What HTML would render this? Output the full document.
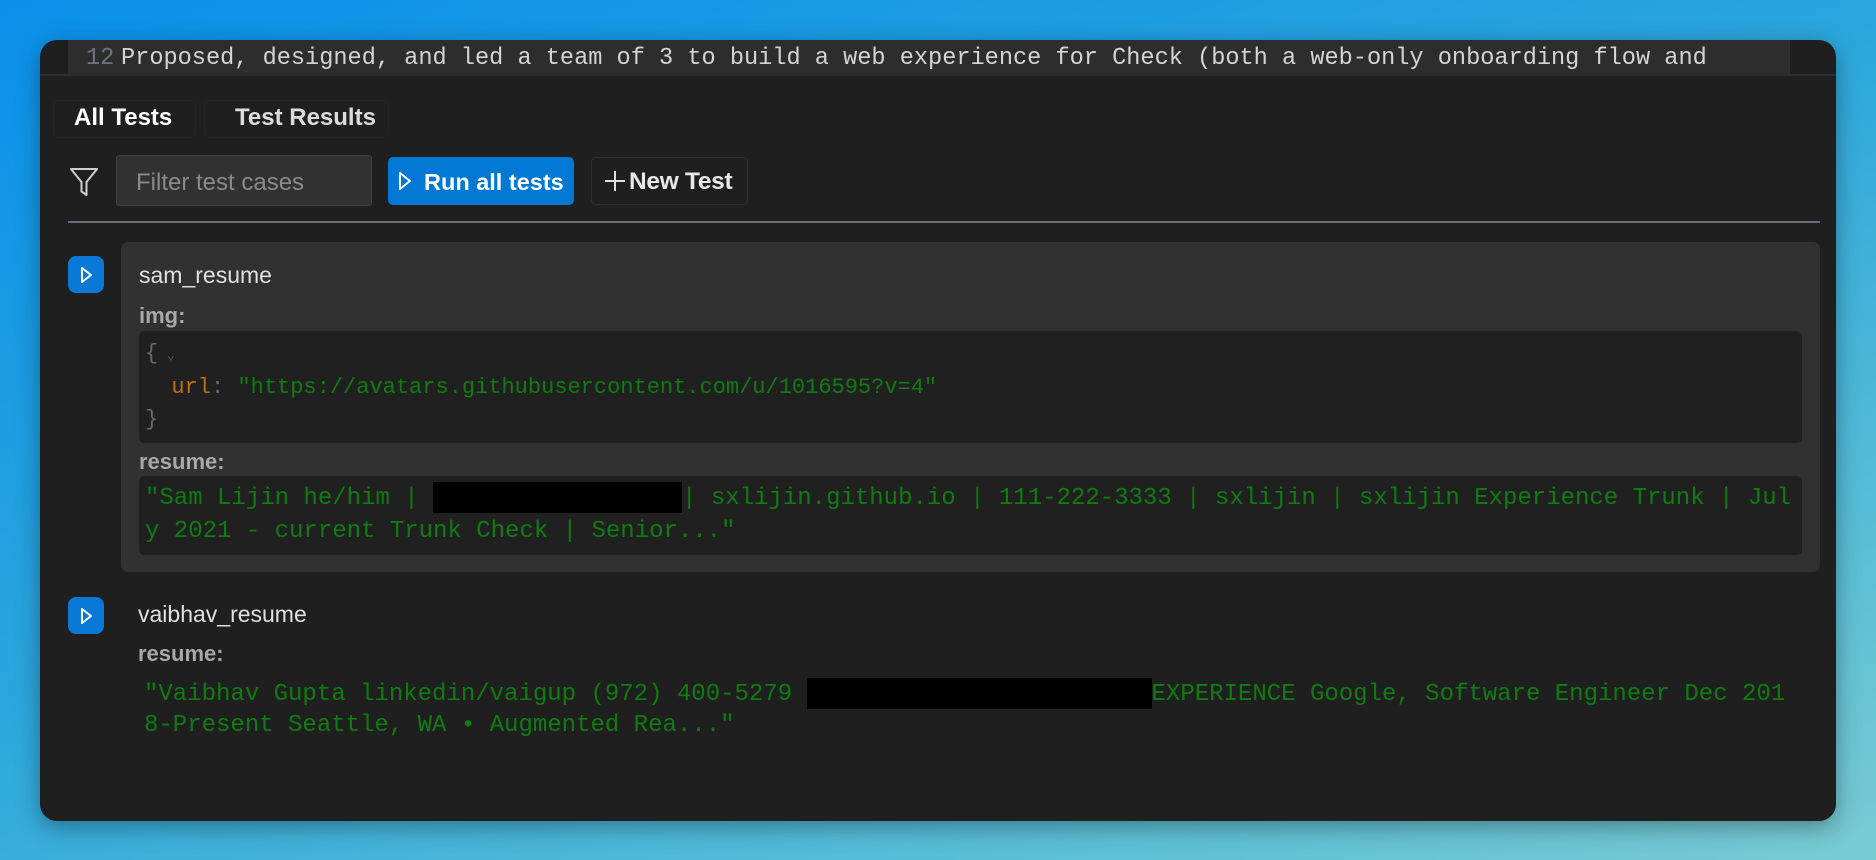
<!DOCTYPE html>
<html><head><meta charset="utf-8"><style>
*{margin:0;padding:0;box-sizing:border-box}
html,body{width:1876px;height:860px;overflow:hidden}
body{background:linear-gradient(160deg,#0a90ea 0%,#2aa6dd 45%,#5bbfd6 80%,#79cbd2 100%);font-family:"Liberation Sans",sans-serif;position:relative}
.win{position:absolute;left:40px;top:40px;width:1796px;height:781px;background:#1f1f1f;border-radius:17px;overflow:hidden;box-shadow:0 6px 24px rgba(0,0,0,.35)}
.abs{position:absolute}
.mono{font-family:"Liberation Mono",monospace;white-space:pre}
.edit{left:28px;top:0;width:1722px;height:34px;background:#2d2d2d}
.eline{left:0;top:34px;width:1796px;height:2px;background:#2a2e35}
.tab{height:30px;font-size:24px;font-weight:bold;line-height:30px}
.btn{border-radius:5px}
.play{width:36px;height:37px;background:#0a78d6;border-radius:8px}
.lbl{font-size:22px;font-weight:bold;color:#a8a8a8}
.green{color:#0e7d10}
.red{display:inline-block;background:#000;vertical-align:middle}
</style></head><body>
<div class="win">
  <div class="abs edit"></div>
  <div class="abs eline"></div>
  <div class="abs mono" style="left:46px;top:2px;height:34px;line-height:34px;font-size:23.6px;color:#6d7480">12</div>
  <div class="abs mono" style="left:81px;top:2px;height:34px;line-height:34px;font-size:23.6px;color:#d4d4d4">Proposed, designed, and led a team of 3 to build a web experience for Check (both a web-only onboarding flow and</div>

  <div class="abs" style="left:13px;top:60px;width:143px;height:38px;border:1px solid #242424;border-radius:6px"></div>
  <div class="abs tab" style="left:34px;top:63px;color:#fff">All Tests</div>
  <div class="abs" style="left:164px;top:60px;width:185px;height:38px;border:1px solid #242424;border-radius:6px"></div>
  <div class="abs tab" style="left:195px;top:63px;color:#dcdcdc">Test Results</div>

  <svg class="abs" style="left:28px;top:126px" width="32" height="32" viewBox="0 0 32 32"><path d="M3 3 H29 L18.5 16 V29 L13.5 25.5 V16 Z" fill="none" stroke="#d0d0d0" stroke-width="2" stroke-linejoin="round"/></svg>
  <div class="abs" style="left:76px;top:115px;width:256px;height:51px;background:#313131;border:1px solid #3e3e3e;border-radius:3px"></div>
  <div class="abs" style="left:96px;top:117px;height:51px;line-height:51px;font-size:24px;color:#8a8a8a">Filter test cases</div>

  <div class="abs btn" style="left:348px;top:117px;width:186px;height:48px;background:#0078d4"></div>
  <svg class="abs" style="left:356px;top:130px" width="18" height="22" viewBox="0 0 18 22"><path d="M4 3 L14 11 L4 19 Z" fill="none" stroke="#fff" stroke-width="2" stroke-linejoin="round"/></svg>
  <div class="abs" style="left:384px;top:118px;height:48px;line-height:48px;font-size:23.5px;font-weight:bold;color:#fff">Run all tests</div>

  <div class="abs btn" style="left:551px;top:117px;width:157px;height:48px;border:1px solid #2a2e36"></div>
  <svg class="abs" style="left:563px;top:129px" width="24" height="24" viewBox="0 0 24 24"><path d="M12 2 V22 M2 12 H22" stroke="#e0e0e0" stroke-width="2"/></svg>
  <div class="abs" style="left:589px;top:118px;height:48px;line-height:48px;font-size:24.5px;font-weight:bold;color:#e8e8e8;letter-spacing:-0.3px">New Test</div>

  <div class="abs" style="left:28px;top:181px;width:1752px;height:2px;background:#6a6c78"></div>

  <div class="abs" style="left:81px;top:202px;width:1699px;height:330px;background:#313131;border-radius:7px"></div>
  <div class="abs play" style="left:28px;top:216px"></div>
  <svg class="abs" style="left:38px;top:224px" width="18" height="22" viewBox="0 0 18 22"><path d="M4 4 L13 11 L4 18 Z" fill="none" stroke="#fff" stroke-width="2" stroke-linejoin="round"/></svg>
  <div class="abs" style="left:99px;top:221px;font-size:23px;line-height:28px;color:#e0e0e0">sam_resume</div>
  <div class="abs lbl" style="left:99px;top:262px;line-height:28px">img:</div>
  <div class="abs" style="left:99px;top:291px;width:1663px;height:112px;background:#202020;border-radius:5px"></div>
  <div class="abs mono" style="left:105px;top:298px;font-size:22px;line-height:32px;color:#6a6a6a">{<span style="font-size:14px;color:#555"> ⌄</span>
  <span style="color:#c0700a">url</span>: <span class="green">"https://avatars.githubusercontent.com/u/1016595?v=4"</span>
}</div>
  <div class="abs lbl" style="left:99px;top:408px;line-height:28px">resume:</div>
  <div class="abs" style="left:99px;top:436px;width:1663px;height:79px;background:#202020;border-radius:5px"></div>
  <div class="abs mono green" style="left:105px;top:442px;font-size:24px;line-height:33px">"Sam Lijin he/him | <span class="red" style="width:249px;height:31px"></span>| sxlijin.github.io | 111-222-3333 | sxlijin | sxlijin Experience Trunk | Jul
y 2021 - current Trunk Check | Senior..."</div>

  <div class="abs play" style="left:28px;top:557px"></div>
  <svg class="abs" style="left:38px;top:565px" width="18" height="22" viewBox="0 0 18 22"><path d="M4 4 L13 11 L4 18 Z" fill="none" stroke="#fff" stroke-width="2" stroke-linejoin="round"/></svg>
  <div class="abs" style="left:98px;top:560px;font-size:23px;line-height:28px;color:#e0e0e0">vaibhav_resume</div>
  <div class="abs lbl" style="left:98px;top:600px;line-height:28px">resume:</div>
  <div class="abs mono green" style="left:104px;top:638px;font-size:24px;line-height:31px">"Vaibhav Gupta linkedin/vaigup (972) 400-5279 <span class="red" style="width:345px;height:31px"></span>EXPERIENCE Google, Software Engineer Dec 201
8-Present Seattle, WA • Augmented Rea..."</div>
</div>
</body></html>
